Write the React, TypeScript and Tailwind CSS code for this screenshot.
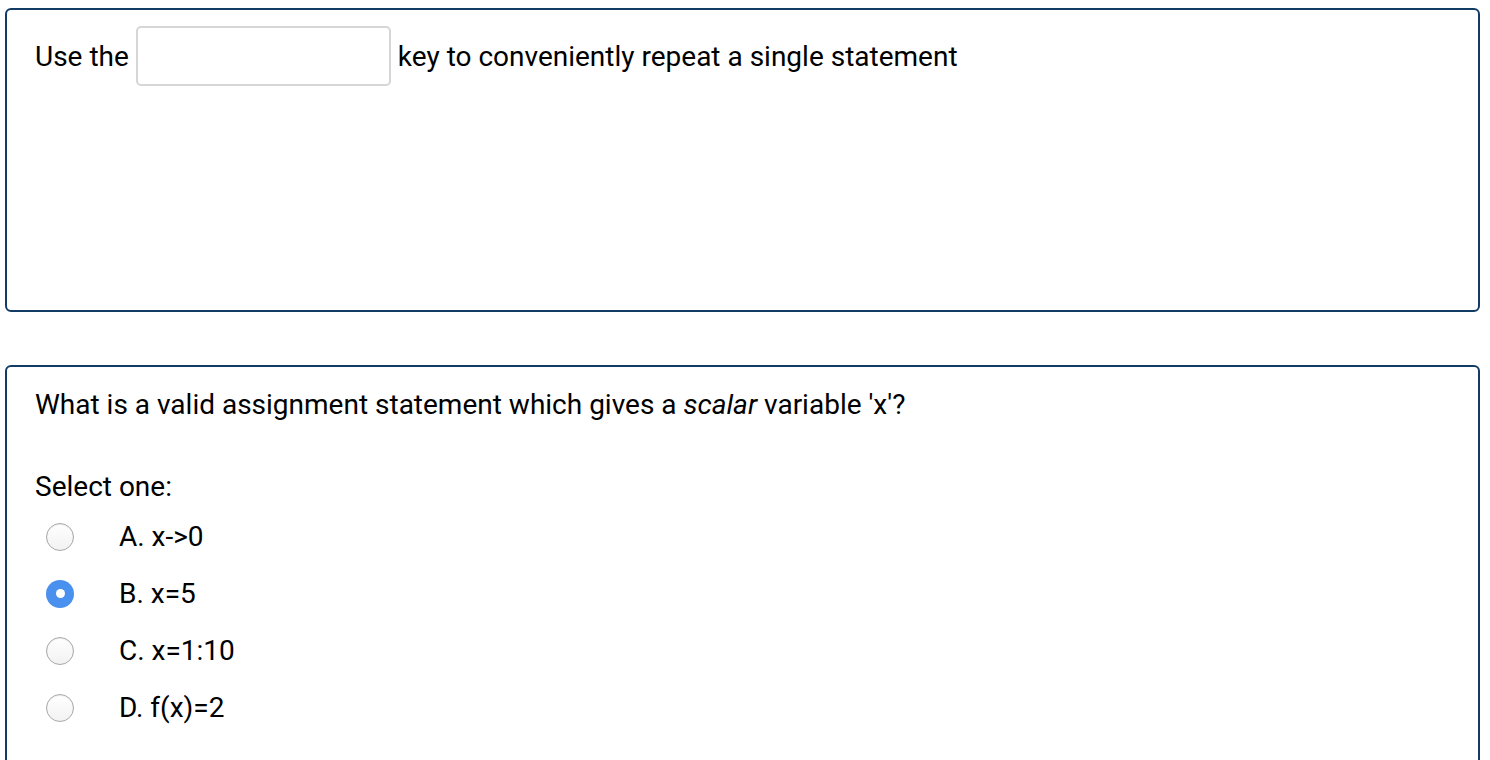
import { useState } from "react";

const OPTIONS = [
  { id: "a", label: "A. x->0" },
  { id: "b", label: "B. x=5" },
  { id: "c", label: "C. x=1:10" },
  { id: "d", label: "D. f(x)=2" },
];

function Radio({ checked, onClick }: { checked: boolean; onClick: () => void }) {
  return (
    <button
      type="button"
      onClick={onClick}
      className={`w-[28px] h-[28px] rounded-full flex items-center justify-center shrink-0 ${
        checked
          ? "bg-[#4a90ee]"
          : "bg-gradient-to-b from-white to-[#f2f2f2] border border-[#a8a8a8] shadow-[inset_0_1px_1px_rgba(0,0,0,0.08)]"
      }`}
    >
      {checked && <span className="w-[9px] h-[9px] rounded-full bg-white" />}
    </button>
  );
}

export default function App() {
  const [answer, setAnswer] = useState("b");
  const [key, setKey] = useState("");

  return (
    <div
      className="bg-white min-h-[760px] pl-[5px] pr-[10px] pt-[8px] text-[28px] text-black"
      style={{ fontFamily: "Roboto, 'Liberation Sans', sans-serif" }}
    >
      {/* Fill-in question */}
      <div className="h-[304px] border-2 border-[#123c66] rounded-[6px] px-[28px] pt-[16px]">
        <div className="flex items-center gap-[7px] leading-[32px]">
          <span className="pt-[2px]">Use the</span>
          <input
            value={key}
            onChange={(e) => setKey(e.target.value)}
            className="w-[255px] h-[60px] rounded-[5px] border-2 border-[#d6d6d6] px-3 outline-none"
          />
          <span className="pt-[2px]">key to conveniently repeat a single statement</span>
        </div>
      </div>

      {/* Multiple choice question */}
      <div className="mt-[53px] h-[420px] border-2 border-[#123c66] rounded-[6px] px-[28px] pt-[22px]">
        <p className="leading-[32px]">
          What is a valid assignment statement which gives a <em>scalar</em> variable 'x'?
        </p>
        <p className="mt-[50px] leading-[32px]">Select one:</p>
        <div className="mt-[5px] flex flex-col">
          {OPTIONS.map((o) => (
            <label key={o.id} className="h-[57px] flex items-center cursor-pointer">
              <span className="w-[84px] pl-[11px] flex">
                <Radio checked={answer === o.id} onClick={() => setAnswer(o.id)} />
              </span>
              <span>{o.label}</span>
            </label>
          ))}
        </div>
      </div>
    </div>
  );
}
